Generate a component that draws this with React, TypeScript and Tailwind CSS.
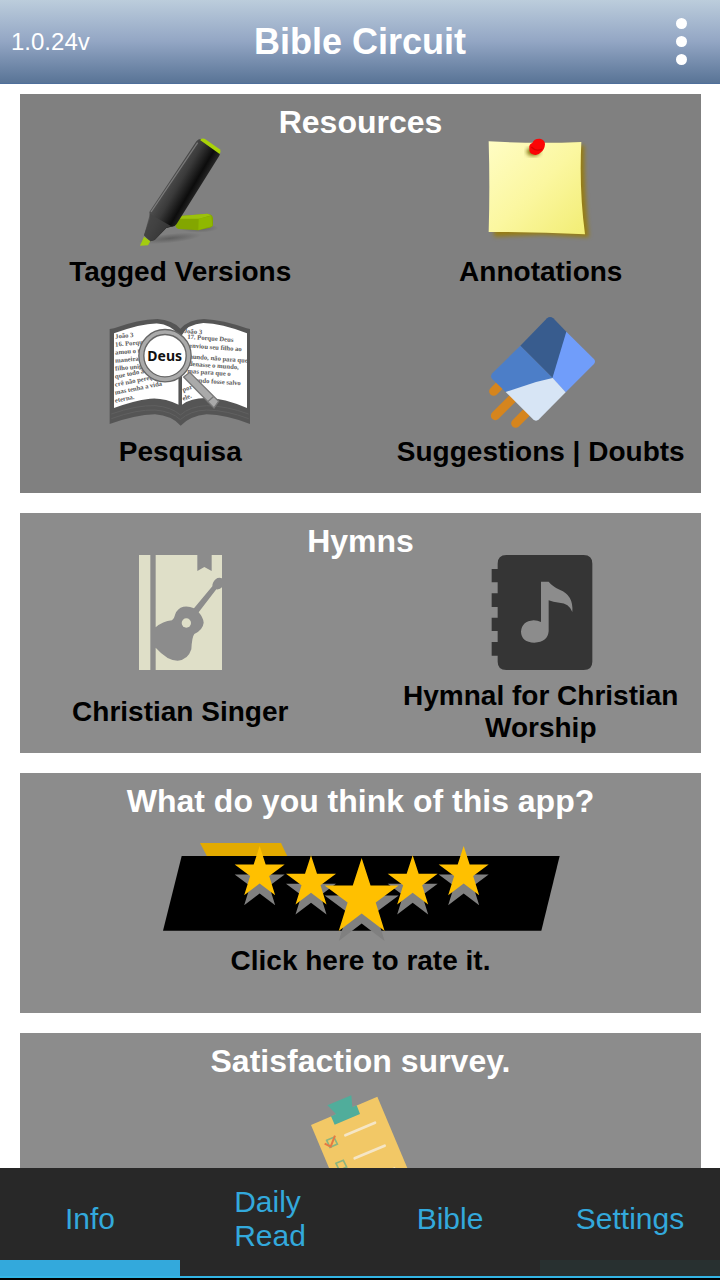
import { useState, type ReactNode } from 'react'
import clsx from 'clsx'

function MarkerIcon() {
  return (
    <svg viewBox="-36 18 432 348" className="h-[116px] w-36" aria-hidden="true">
      <defs>
        <linearGradient id="marker-body" gradientUnits="userSpaceOnUse" x1="150" y1="140" x2="235" y2="190">
          <stop offset="0" stopColor="#505050" />
          <stop offset="0.35" stopColor="#3a3a3a" />
          <stop offset="0.75" stopColor="#0c0c0c" />
          <stop offset="1" stopColor="#2b2b2b" />
        </linearGradient>
        <radialGradient id="marker-shadow">
          <stop offset="0" stopColor="#4a4a4a" stopOpacity="0.6" />
          <stop offset="1" stopColor="#4a4a4a" stopOpacity="0" />
        </radialGradient>
      </defs>
      <ellipse cx="150" cy="325" rx="95" ry="14" fill="url(#marker-shadow)" transform="rotate(-6 150 325)" />
      <ellipse cx="235" cy="294" rx="60" ry="14" fill="url(#marker-shadow)" />
      <path d="M182 258 L262 251 Q277 252 279 264 L279 285 Q277 293 266 294 L235 301 L175 297 Q163 293 168 280Z" fill="#83a600" />
      <path d="M182 258 L262 251 L274 256 L238 266 L176 266Z" fill="#9cc20c" />
      <path d="M236 266 L274 257 L277 288 L235 300Z" fill="#8fb800" />
      <path d="M229 34 Q236 25 246 27 L296 62 Q303 69 297 79 L170 282 Q163 292 154 290 L139 294 L104 330 L91 334 L72 316 L90 264 L88 246Z" fill="url(#marker-body)" />
      <path d="M90 252 L154 289 L139 293 L104 330 L91 334 L72 316Z" fill="#444" opacity="0.75" />
      <path d="M233 38 L93 246" stroke="#9a9a9a" strokeWidth="4" opacity="0.6" />
      <path d="M240 30 Q247 23 255 27 L299 58 Q304 63 299 72Z" fill="#a9d308" />
      <path d="M72 320 L91 334 L84 346 L60 347Z" fill="#a3cc10" />
    </svg>
  )
}

function NoteIcon() {
  return (
    <svg viewBox="-21 18 432 348" className="h-[116px] w-36" aria-hidden="true">
      <defs>
        <linearGradient id="note-paper" x1="0" y1="0" x2="1" y2="1">
          <stop offset="0" stopColor="#fffdc4" />
          <stop offset="0.5" stopColor="#fbf7a0" />
          <stop offset="1" stopColor="#f2ed74" />
        </linearGradient>
        <filter id="note-blur" x="-20%" y="-20%" width="140%" height="140%">
          <feGaussianBlur stdDeviation="6" />
        </filter>
      </defs>
      <path d="M60 50 L325 46 Q324 180 339 322 L200 314 L54 320Z" fill="#9a7c00" filter="url(#note-blur)" opacity="0.85" />
      <path d="M38 34 Q180 42 316 36 Q309 180 327 313 Q180 304 38 306 Q42 170 38 34Z" fill="url(#note-paper)" />
      <ellipse cx="172" cy="65" rx="20" ry="12" fill="#776b00" filter="url(#note-blur)" />
      <path d="M160 56 Q158 42 169 39 Q174 25 192 26 Q207 29 207 43 Q206 58 195 67 Q184 79 170 73 Q159 68 160 56Z" fill="#fb0505" />
      <path d="M166 51 Q180 66 198 57" fill="none" stroke="#d80000" strokeWidth="4" />
    </svg>
  )
}

const leftPage = ['João 3', '16. Porque', 'amou o mu', 'maneira qu', 'filho unigênito', 'que todo aquele', 'crê não pereça, m', 'mas tenha a vida', 'eterna.']
const rightPage = [
  { text: 'João 3', x: 306, y: 73 },
  { text: '17. Porque Deus', x: 400, y: 96 },
  { text: 'enviou seu filho ao', x: 425, y: 124 },
  { text: 'mundo, não para que', x: 443, y: 158 },
  { text: 'condenasse o mundo,', x: 416, y: 178 },
  { text: 'mas para que o', x: 392, y: 198 },
  { text: 'mundo fosse salvo', x: 422, y: 226 },
]

function SearchBookIcon() {
  return (
    <svg viewBox="24 18 432 348" className="h-[116px] w-36" aria-hidden="true">
      <defs>
        <clipPath id="book-left">
          <path d="M42 70 Q120 42 170 40 Q215 45 236 75 L236 284 Q190 262 150 266 Q100 272 42 294Z" />
        </clipPath>
        <clipPath id="book-right">
          <path d="M246 75 Q262 42 310 39 Q365 40 441 70 L441 294 Q370 264 325 264 Q275 262 246 284Z" />
        </clipPath>
      </defs>
      <path d="M29 57 L42 55 Q115 28 172 27 Q218 30 241 56 Q268 28 312 27 Q370 30 440 55 L450 57 L450 342 Q380 315 320 313 Q270 318 242 347 Q215 317 165 313 Q105 315 29 342Z" fill="#555" />
      <path d="M34 312 Q110 285 165 287 Q215 291 241 315 Q270 289 320 287 Q380 288 446 312" fill="none" stroke="#606060" strokeWidth="3" />
      <path d="M34 326 Q110 298 165 300 Q215 304 241 329 Q270 302 320 300 Q380 301 446 326" fill="none" stroke="#606060" strokeWidth="3" />
      <g clipPath="url(#book-left)">
        <rect x="40" y="30" width="198" height="270" fill="#fff" />
        <g fontFamily="Liberation Serif, serif" fontSize="20" fontWeight="700" fill="#5a5a5a">
          {leftPage.map((line, i) => (
            <text key={line} x="46" y={86 + i * 24} transform={`rotate(${i < 5 ? -5 : -11} 46 ${86 + i * 24})`}>{line}</text>
          ))}
        </g>
      </g>
      <g clipPath="url(#book-right)">
        <rect x="244" y="30" width="199" height="270" fill="#fff" />
        <g fontFamily="Liberation Serif, serif" fontSize="20" fontWeight="700" fill="#5a5a5a">
          {rightPage.map((line) => (
            <text key={line.text} x={line.x} y={line.y} textAnchor="end" transform={`rotate(4 ${line.x} ${line.y})`}>{line.text}</text>
          ))}
          <text x="250" y="246" transform="rotate(-20 250 246)">por</text>
          <text x="250" y="272" transform="rotate(-20 250 272)">ele.</text>
        </g>
      </g>
      <path d="M251 201 L269 187 L356 274 L342 294Z" fill="#aaa" stroke="#777" strokeWidth="4" />
      <path d="M322 276 L340 260" stroke="#777" strokeWidth="4" />
      <circle cx="195" cy="137" r="71" fill="#fff" stroke="#666" strokeWidth="19" />
      <circle cx="195" cy="137" r="71" fill="none" stroke="#aaa" strokeWidth="11" />
      <text x="194" y="153" textAnchor="middle" fontFamily="Noto Sans, sans-serif" fontSize="42" fontWeight="700" fill="#111">Deus</text>
    </svg>
  )
}

function SuggestionIcon() {
  return (
    <svg viewBox="-21 18 432 348" className="h-[116px] w-36" aria-hidden="true">
      <g stroke="#d6851d" strokeWidth="27" strokeLinecap="round">
        <path d="M53 244 L75 222" />
        <path d="M58 317 L113 262" />
        <path d="M119 340 L150 309" />
      </g>
      <path d="M133 107 L213 25 Q222 17 232 25 L271 65 L256 145 L230 204Z" fill="#385c8e" />
      <path d="M271 65 L353 146 Q361 154 353 163 L269 247 L229 205Z" fill="#709dfa" />
      <path d="M133 107 L230 204 L180 223 L89 246 L48 206 Q42 198 49 190Z" fill="#4c7ec8" />
      <path d="M89 246 L180 216 L230 204 L269 247 L189 328 Q180 336 171 328Z" fill="#d7e5f5" />
    </svg>
  )
}

function GuitarBookIcon() {
  return (
    <svg viewBox="-66 30 432 348" className="h-[116px] w-36" aria-hidden="true">
      <path d="M27 30 H61 V375 H27Z" fill="#dfdfc8" />
      <path d="M77 30 H202 V78 L223 66 L245 78 V30 H276 V100 Q265 96 257 103 Q247 112 247 124 L192 190 Q176 182 160 185 Q142 190 136 207 Q133 221 126 226 Q98 229 77 247 V308 Q112 347 143 347 Q174 345 184 313 Q186 275 193 267 Q219 254 221 233 Q220 218 206 202 L259 133 Q270 134 276 127 V375 H77Z" fill="#dfdfc8" />
      <circle cx="169" cy="234" r="14" fill="#dfdfc8" />
    </svg>
  )
}

function MusicBookIcon() {
  return (
    <svg viewBox="-36 30 432 348" className="h-[116px] w-36" aria-hidden="true">
      <path d="M76 30 H308 Q334 30 334 56 V350 Q334 375 308 375 H76 Q50 375 50 350 V332 H32 V291 H50 V258 H32 V218 H50 V186 H32 V145 H50 V112 H32 V72 H50 V56 Q50 30 76 30Z" fill="#353535" />
      <path d="M180 110 H203 Q213 123 236 134 Q278 150 274 201 Q264 174 235 173 Q216 172 203 166 V259 Q200 292 160 293 Q121 291 120 260 Q122 229 158 226 Q170 226 180 231Z" fill="#8c8c8c" />
    </svg>
  )
}

const STAR = 'M0 -100 L24 -26 L100 -26 L38 20 L62 97 L0 50 L-62 97 L-38 20 L-100 -26 L-24 -26Z'

const stars = [
  { x: 326, y: 108, size: 0.75 },
  { x: 480, y: 136, size: 0.75 },
  { x: 785, y: 136, size: 0.75 },
  { x: 938, y: 108, size: 0.75 },
  { x: 632, y: 180, size: 1.11 },
]

function StarsBanner() {
  return (
    <svg viewBox="0 -60 1260 378" className="h-[126px] w-[420px]" aria-hidden="true">
      <path d="M147 24 H390 L409 64 H168Z" fill="#e2aa00" />
      <path d="M92 63 H1226 L1171 287 H36Z" fill="#000" />
      {stars.map((s) => (
        <g key={s.x}>
          <path d={STAR} fill="#808080" transform={`translate(${s.x} ${s.y + 30}) scale(${s.size})`} />
          <path d={STAR} fill="#ffc000" transform={`translate(${s.x} ${s.y}) scale(${s.size})`} />
        </g>
      ))}
    </svg>
  )
}

function SurveyIcon() {
  return (
    <svg viewBox="-6 -30 432 378" className="h-[126px] w-36" aria-hidden="true">
      <path d="M60 120 L259 35 L385 335 L186 420Z" fill="#f2c866" />
      <path d="M109 61 L181 31 L184 66 L197 61 L207 87 L131 119 L120 94 L135 87Z" fill="#50ad9b" />
      <g stroke="#f5e6c6" strokeWidth="8" strokeLinecap="round">
        <path d="M163 151 L252 113" />
        <path d="M191 220 L281 182" />
        <path d="M220 289 L310 251" />
      </g>
      <g fill="none" stroke="#8bb581" strokeWidth="5">
        <path d="M107 166 L129 157 L139 177 L117 187Z" />
        <path d="M135 235 L157 226 L167 246 L145 256Z" />
      </g>
      <path d="M101 176 L119 185 L132 152" fill="none" stroke="#e57a43" strokeWidth="6" />
    </svg>
  )
}

function Section({ title, className, children }: { title: string; className?: string; children: ReactNode }) {
  return (
    <section className={clsx('pt-3.5', className)}>
      <h2 className="text-center text-[32px] leading-7 font-bold text-white">{title}</h2>
      {children}
    </section>
  )
}

function Tile({ icon, label, tall = false }: { icon: ReactNode; label: string; tall?: boolean }) {
  return (
    <button type="button" className="flex flex-col items-center text-[28px] leading-8 font-bold text-black">
      {icon}
      <span className={clsx('flex items-center justify-center text-center', tall ? 'min-h-[82px]' : 'min-h-10')}>
        {label}
      </span>
    </button>
  )
}

const tabs = ['Info', 'Daily Read', 'Bible', 'Settings']

export default function App() {
  const [active, setActive] = useState('Info')

  return (
    <div className="flex h-screen flex-col bg-white font-['Liberation_Sans',Arial,sans-serif]">
      {/* Header */}
      <header className="grid h-[84px] shrink-0 grid-cols-[1fr_auto_1fr] items-center border-b border-[#4f6f9b] bg-linear-to-b from-[#bccddc] via-[#93a6c4] to-[#597496] text-white">
        <span className="pl-[11px] text-2xl">1.0.24v</span>
        <h1 className="text-4xl font-bold">Bible Circuit</h1>
        <button type="button" aria-label="Menu" className="mr-[19px] flex h-16 w-10 flex-col items-center justify-center gap-[7px] justify-self-end">
          <span className="size-[11px] rounded-full bg-white" />
          <span className="size-[11px] rounded-full bg-white" />
          <span className="size-[11px] rounded-full bg-white" />
        </button>
      </header>

      <main className="flex min-h-0 flex-1 flex-col gap-5 overflow-y-auto pt-2.5 pr-[19px] pl-5 [scrollbar-width:none] *:shrink-0">
        <Section title="Resources" className="bg-[#808080] pb-[21px]">
          <div className="grid grid-cols-2 gap-x-10 gap-y-6">
            <Tile icon={<MarkerIcon />} label="Tagged Versions" />
            <Tile icon={<NoteIcon />} label="Annotations" />
            <Tile icon={<SearchBookIcon />} label="Pesquisa" />
            <Tile icon={<SuggestionIcon />} label="Suggestions | Doubts" />
          </div>
        </Section>

        <Section title="Hymns" className="bg-[#8c8c8c]">
          <div className="grid grid-cols-2 gap-x-10">
            <Tile icon={<GuitarBookIcon />} label="Christian Singer" tall />
            <Tile icon={<MusicBookIcon />} label="Hymnal for Christian Worship" tall />
          </div>
        </Section>

        <Section title="What do you think of this app?" className="bg-[#8c8c8c] pb-8">
          <div className="flex justify-center">
            <Tile icon={<StarsBanner />} label="Click here to rate it." />
          </div>
        </Section>

        <Section title="Satisfaction survey." className="bg-[#8c8c8c] pb-16">
          <button type="button" aria-label="Satisfaction survey" className="flex w-full justify-center">
            <SurveyIcon />
          </button>
        </Section>
      </main>

      {/* Bottom tabs */}
      <nav className="grid shrink-0 grid-cols-4 border-b-2 border-black bg-[#282828]">
        {tabs.map((tab) => (
          <button
            key={tab}
            type="button"
            onClick={() => setActive(tab)}
            className="flex flex-col items-center border-b-2 border-[#33b5e5] text-[30px] leading-[34px] text-[#33a9dc]"
          >
            <span className="flex h-[92px] items-center pt-2.5 text-left">
              {tab === 'Daily Read' ? <span className="w-min">{tab}</span> : tab}
            </span>
            <span
              className={clsx(
                'h-4 w-full',
                active === tab ? 'bg-[#33a9dc]' : tab === 'Settings' ? 'bg-[#283030]' : 'bg-transparent',
              )}
            />
          </button>
        ))}
      </nav>
    </div>
  )
}
